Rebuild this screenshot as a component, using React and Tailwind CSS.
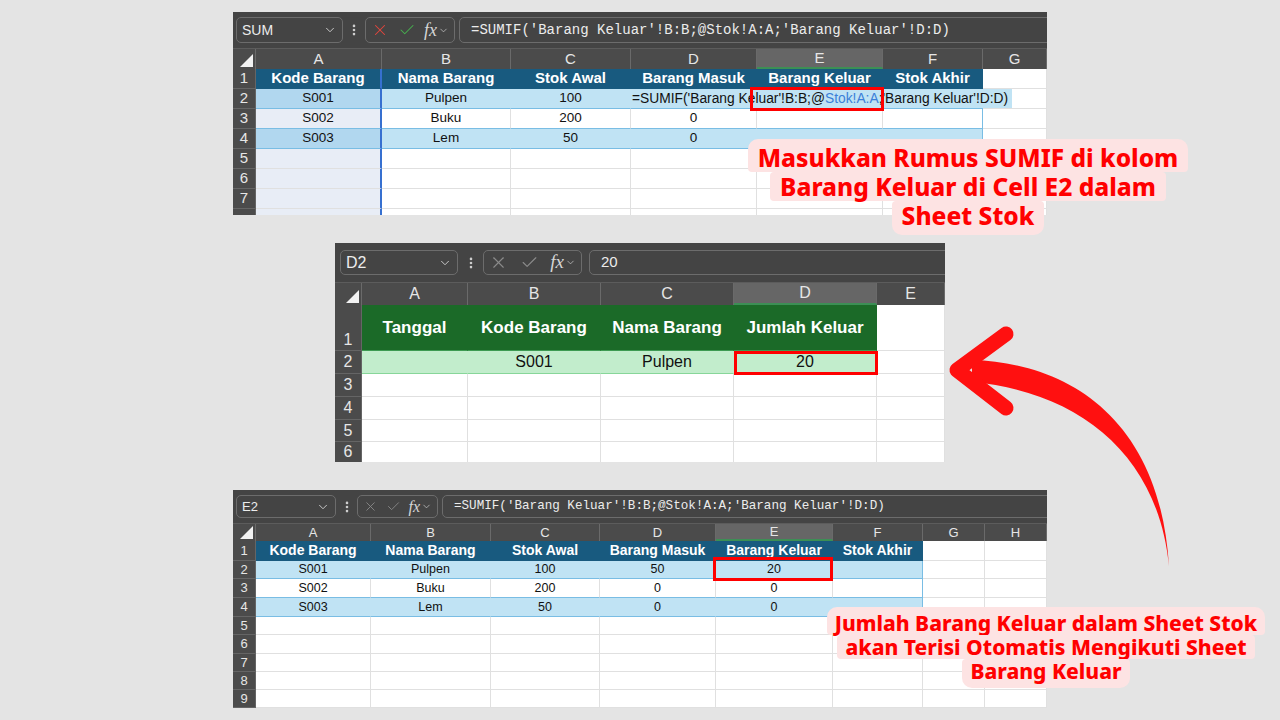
import React from "react";
import { ChevronDown, EllipsisVertical, X, Check } from "lucide-react";
import { twMerge } from "tailwind-merge";

const FORMULA = "=SUMIF('Barang Keluar'!B:B;@Stok!A:A;'Barang Keluar'!D:D)";

const cellBase =
  "shrink-0 h-full flex items-center justify-center border-r border-b border-[#e0e0e0] bg-white text-[#111111] whitespace-nowrap";

// table styles (blue "Stok" table, green "Barang Keluar" table)
const HEAD_BLUE = "bg-[#185a7f] text-white font-bold border-r-[#185a7f] border-b-[#185a7f]";
const ROW_BLUE = "bg-[#c0e3f4] border-r-[#c0e3f4] border-b-[#79bde4]";
const ROW_PLAIN = "border-b-[#79bde4]";
const HEAD_GREEN = "bg-[#1b6a28] text-white font-bold border-r-[#1b6a28] border-b-[#3d9b52]";
const ROW_GREEN = "bg-[#c2edcc] border-r-[#c2edcc] border-b-[#87d699]";

function Cell({ w, className, children }) {
  return <div className={twMerge(cellBase, w, className)}>{children}</div>;
}

function FormulaBar({ className, nameBox, nameText, dots, toolBox, icon, fx, input, name, active, children }) {
  return (
    <div className={twMerge("flex items-center bg-[#444444] shrink-0 overflow-hidden", className)}>
      <div
        className={twMerge(
          "flex items-center justify-between rounded-[5px] border border-[#6c6c6c] pl-[5px] pr-[5px] text-[#ececec] shrink-0",
          nameBox
        )}
      >
        <span className={nameText}>{name}</span>
        <ChevronDown size={14} strokeWidth={1.6} className="text-[#d0d0d0]" />
      </div>
      <div className={twMerge("flex justify-center shrink-0 text-[#cfcfcf]", dots)}>
        <EllipsisVertical size={14} strokeWidth={2.5} />
      </div>
      <div
        className={twMerge(
          "flex items-center justify-between rounded-[5px] border border-[#6c6c6c] px-[5px] shrink-0",
          toolBox
        )}
      >
        <X size={icon} strokeWidth={1.4} className={active ? "text-[#e5463d]" : "text-[#8c8c8c]"} />
        <Check size={icon} strokeWidth={1.4} className={active ? "text-[#47b04f]" : "text-[#8c8c8c]"} />
        <span className={twMerge("font-['Liberation_Serif',serif] italic text-[#d6d6d6] leading-none flex items-center", fx)}>
          fx
          <ChevronDown size={11} strokeWidth={1.6} className="ml-[1px] not-italic text-[#c8c8c8]" />
        </span>
      </div>
      <div
        className={twMerge(
          "flex items-center flex-1 -mr-[10px] rounded-[5px] border border-[#6c6c6c] text-[#ececec] whitespace-nowrap",
          input
        )}
      >
        {children}
      </div>
    </div>
  );
}

function ColHeads({ headW, cols, letters, sel, className }) {
  return (
    <div className={twMerge("flex shrink-0 bg-[#4b4b4b] border-t border-[#5c5c5c] text-[#e6e6e6]", className)}>
      <div className={twMerge("shrink-0 relative h-full border-r border-[#6a6a6a]", headW)}>
        <svg className="absolute right-[2px] bottom-[2px]" width="13" height="13" viewBox="0 0 13 13">
          <polygon points="13,0 13,13 0,13" fill="#f2f2f2" />
        </svg>
      </div>
      {letters.map((l, i) => (
        <div
          key={l}
          className={twMerge(
            "shrink-0 h-full flex items-center justify-center border-r border-[#6a6a6a]",
            cols[i],
            i === sel && "bg-[#666666] border-b-2 border-b-[#3c8f55]"
          )}
        >
          {l}
        </div>
      ))}
    </div>
  );
}

function Row({ h, num, headW, numClass, children }) {
  return (
    <div className={twMerge("flex shrink-0", h)}>
      <div
        className={twMerge(
          "shrink-0 h-full flex items-center justify-center bg-[#4b4b4b] border-r border-b border-[#656565] text-[#e6e6e6]",
          headW,
          numClass
        )}
      >
        {num}
      </div>
      {children}
    </div>
  );
}

function RedBox({ className }) {
  return <div className={twMerge("absolute z-20 border-[3px] border-[#ff0000]", className)} />;
}

/* ---------- sheet "Stok" while typing the formula ---------- */

const topW = ["w-[126px]", "w-[129px]", "w-[120px]", "w-[126px]", "w-[126px]", "w-[100px]", "w-[64px]"];
const stokRows = [
  ["Kode Barang", "Nama Barang", "Stok Awal", "Barang Masuk", "Barang Keluar", "Stok Akhir"],
  ["S001", "Pulpen", "100", "", "", ""],
  ["S002", "Buku", "200", "0", "", ""],
  ["S003", "Lem", "50", "0", "", ""],
];

function StokEditing() {
  const colA = "border-r-2 border-r-[#3670d0]";
  return (
    <div className="relative ml-[233px] w-[814px] h-[203px] overflow-hidden flex flex-col bg-white text-[13.5px]">
      <FormulaBar
        className="h-[36px] pl-[3px]"
        nameBox="w-[107px] h-[26px]"
        nameText="text-[14px]"
        dots="w-[22px]"
        toolBox="w-[90px] h-[26px]"
        icon={18}
        fx="text-[18px]"
        input="ml-[4px] h-[26px] pl-[11px] font-['Liberation_Mono',monospace] text-[14px]"
        name="SUM"
        active
      >
        {FORMULA}
      </FormulaBar>
      <ColHeads
        className="h-[21px] text-[15px]"
        headW="w-[23px]"
        cols={topW}
        letters={["A", "B", "C", "D", "E", "F", "G"]}
        sel={4}
      />
      {stokRows.map((r, ri) => (
        <Row key={ri} h="h-[20px]" num={ri + 1} headW="w-[23px]" numClass="text-[15px]">
          {r.map((v, ci) => {
            let cls;
            if (ri === 0) cls = twMerge(HEAD_BLUE, "text-[15px]");
            else if (ri % 2 === 1) cls = ci === 0 ? twMerge(ROW_BLUE, "bg-[#b1d7ef]") : ROW_BLUE;
            else cls = ci === 0 ? twMerge(ROW_PLAIN, "bg-[#e8edf6]") : ROW_PLAIN;
            if (ci === 0) cls = twMerge(cls, colA);
            if (ci === 5 && ri > 0) cls = twMerge(cls, "border-r-[#79bde4]");
            if (ri === 1 && ci === 3) {
              return (
                <Cell key={ci} w={topW[ci]} className={twMerge(cls, "justify-start overflow-visible")}>
                  <span className="relative z-10 bg-[#c0e3f4] pl-[1px] pr-[4px] leading-[19px] text-[13.8px]">
                    =SUMIF('Barang Keluar'!B:B;@<span className="text-[#3b7fd8]">Stok!A:A</span>;'Barang Keluar'!D:D)
                  </span>
                </Cell>
              );
            }
            return (
              <Cell key={ci} w={topW[ci]} className={cls}>
                {v}
              </Cell>
            );
          })}
          <Cell w={topW[6]} />
        </Row>
      ))}
      {[5, 6, 7, 8].map((n) => (
        <Row key={n} h="h-[20px]" num={n < 8 ? n : ""} headW="w-[23px]" numClass="text-[15px]">
          {topW.map((w, ci) => (
            <Cell key={ci} w={w} className={ci === 0 ? twMerge("bg-[#e8edf6]", colA) : ""} />
          ))}
        </Row>
      ))}
      <RedBox className="left-[517px] top-[75px] w-[134px] h-[24px]" />
    </div>
  );
}

/* ---------- sheet "Barang Keluar" ---------- */

const midW = ["w-[106px]", "w-[133px]", "w-[133px]", "w-[143px]", "w-[68px]"];

function BarangKeluar() {
  return (
    <div className="relative mt-[28px] ml-[335px] w-[610px] h-[219px] overflow-hidden flex flex-col bg-white text-[16px]">
      <FormulaBar
        className="h-[39px] pl-[5px]"
        nameBox="w-[118px] h-[25px]"
        nameText="text-[16px]"
        dots="w-[25px]"
        toolBox="w-[99px] h-[25px]"
        icon={19}
        fx="text-[19px]"
        input="ml-[7px] h-[25px] pl-[11px] text-[15px]"
        name="D2"
      >
        20
      </FormulaBar>
      <ColHeads
        className="h-[23px] text-[16px]"
        headW="w-[27px]"
        cols={midW}
        letters={["A", "B", "C", "D", "E"]}
        sel={3}
      />
      <Row h="h-[46px]" num={1} headW="w-[27px]" numClass="items-end text-[16px] leading-[20px]">
        {["Tanggal", "Kode Barang", "Nama Barang", "Jumlah Keluar"].map((v, ci) => (
          <Cell key={ci} w={midW[ci]} className={twMerge(HEAD_GREEN, "text-[17px]")}>
            {v}
          </Cell>
        ))}
        <Cell w={midW[4]} />
      </Row>
      <Row h="h-[23px]" num={2} headW="w-[27px]" numClass="text-[16px]">
        {["", "S001", "Pulpen", "20"].map((v, ci) => (
          <Cell key={ci} w={midW[ci]} className={ci === 3 ? twMerge(ROW_GREEN, "border-r-[#1d6b2c]") : ROW_GREEN}>
            {v}
          </Cell>
        ))}
        <Cell w={midW[4]} />
      </Row>
      {[
        [3, "h-[23px]"],
        [4, "h-[23px]"],
        [5, "h-[22px]"],
        [6, "h-[21px]"],
      ].map(([n, h]) => (
        <Row key={n} h={h} num={n} headW="w-[27px]" numClass="text-[16px]">
          {midW.map((w, ci) => (
            <Cell key={ci} w={w} />
          ))}
        </Row>
      ))}
      <RedBox className="left-[399px] top-[108px] w-[144px] h-[24px]" />
    </div>
  );
}

/* ---------- sheet "Stok" with the result ---------- */

const botW = ["w-[115px]", "w-[120px]", "w-[109px]", "w-[116px]", "w-[117px]", "w-[90px]", "w-[62px]", "w-[62px]"];
const resultRows = [
  ["Kode Barang", "Nama Barang", "Stok Awal", "Barang Masuk", "Barang Keluar", "Stok Akhir"],
  ["S001", "Pulpen", "100", "50", "20", ""],
  ["S002", "Buku", "200", "0", "0", ""],
  ["S003", "Lem", "50", "0", "0", ""],
];
const botH = ["h-[20px]", "h-[18px]", "h-[19px]", "h-[19px]", "h-[18px]", "h-[19px]", "h-[18px]", "h-[18px]", "h-[18px]"];

function StokResult() {
  return (
    <div className="relative mt-[28px] ml-[233px] w-[814px] h-[218px] overflow-hidden flex flex-col bg-white text-[12.5px]">
      <FormulaBar
        className="h-[33px] pl-[3px]"
        nameBox="w-[100px] h-[23px]"
        nameText="text-[13px]"
        dots="w-[21px]"
        toolBox="w-[81px] h-[23px]"
        icon={15}
        fx="text-[16px]"
        input="ml-[4px] h-[23px] pl-[11px] font-['Liberation_Mono',monospace] text-[12.6px]"
        name="E2"
      >
        {FORMULA}
      </FormulaBar>
      <ColHeads
        className="h-[18px] text-[13px]"
        headW="w-[23px]"
        cols={botW}
        letters={["A", "B", "C", "D", "E", "F", "G", "H"]}
        sel={4}
      />
      {resultRows.map((r, ri) => (
        <Row key={ri} h={botH[ri]} num={ri + 1} headW="w-[23px]" numClass="text-[13px]">
          {r.map((v, ci) => {
            let cls = ri === 0 ? twMerge(HEAD_BLUE, "text-[14px]") : ri % 2 === 1 ? ROW_BLUE : ROW_PLAIN;
            if (ci === 5 && ri > 0) cls = twMerge(cls, "border-r-[#79bde4]");
            return (
              <Cell key={ci} w={botW[ci]} className={cls}>
                {v}
              </Cell>
            );
          })}
          <Cell w={botW[6]} />
          <Cell w={botW[7]} />
        </Row>
      ))}
      {[5, 6, 7, 8, 9].map((n) => (
        <Row key={n} h={botH[n - 1]} num={n} headW="w-[23px]" numClass="text-[13px]">
          {botW.map((w, ci) => (
            <Cell key={ci} w={w} />
          ))}
        </Row>
      ))}
      <RedBox className="left-[480px] top-[67px] w-[120px] h-[24px]" />
    </div>
  );
}

// caption with a pink highlight behind each line
function Note({ lines, className, lineClass }) {
  const last = lines.length - 1;
  return (
    <div className={twMerge("absolute flex flex-col items-center font-['Noto_Sans',sans-serif]", className)}>
      {lines.map((t, i) => (
        <span
          key={i}
          className={twMerge(
            "bg-[#fde3e3] rounded-[10px] text-[#ff0000] font-extrabold whitespace-nowrap",
            lineClass,
            i === 0 && "pt-[4px] rounded-b-[4px]",
            i > 0 && i < last && "rounded-[4px]",
            i === last && "pb-[5px] rounded-t-[4px]"
          )}
        >
          {t}
        </span>
      ))}
    </div>
  );
}

function CurvedArrow() {
  return (
    <svg className="absolute left-0 top-0 pointer-events-none" width="1280" height="720" viewBox="0 0 1280 720">
      <path
        d="M 972 360 C 1070 363, 1160 420, 1169 566 C 1158 455, 1080 392, 972 382 Z"
        fill="#ff1010"
      />
      <polyline
        points="1006,334 957,370 1006,408"
        fill="none"
        stroke="#ff1010"
        strokeWidth="15"
        strokeLinecap="round"
        strokeLinejoin="round"
      />
    </svg>
  );
}

export default function App() {
  return (
    <div className="relative w-[1280px] h-[720px] overflow-hidden bg-[#e4e4e4] pt-[12px] font-['Liberation_Sans',Arial,sans-serif]">
      <StokEditing />
      <BarangKeluar />
      <StokResult />
      <CurvedArrow />
      <Note
        className="left-[668px] top-[139px] w-[600px]"
        lineClass="text-[24.5px] leading-[29px] px-[10px]"
        lines={["Masukkan Rumus SUMIF di kolom", "Barang Keluar di Cell E2 dalam", "Sheet Stok"]}
      />
      <Note
        className="left-[746px] top-[607px] w-[600px]"
        lineClass="text-[21px] leading-[24px] px-[8px]"
        lines={["Jumlah Barang Keluar dalam Sheet Stok", "akan Terisi Otomatis Mengikuti Sheet", "Barang Keluar"]}
      />
    </div>
  );
}
